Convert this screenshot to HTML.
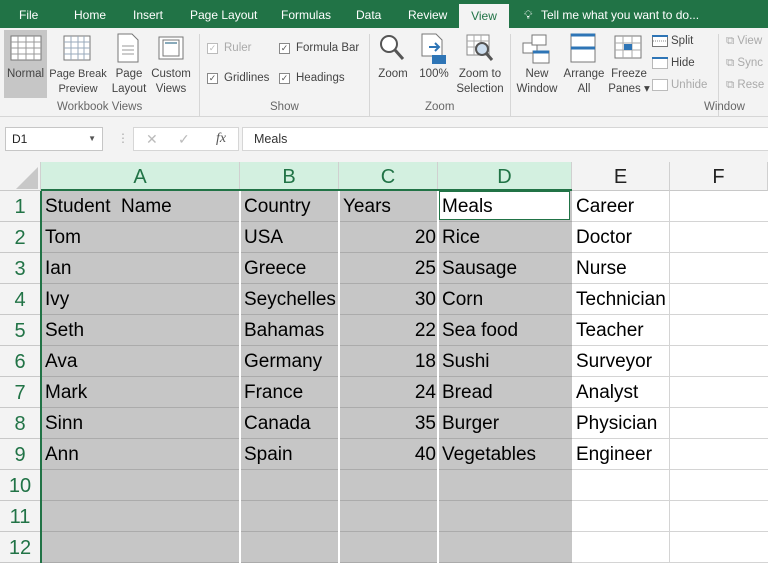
<!DOCTYPE html>
<html><head><meta charset="utf-8"><style>
*{margin:0;padding:0;box-sizing:border-box}
body{width:768px;height:560px;overflow:hidden;background:#fff;font-family:"Liberation Sans",sans-serif;position:relative}
.a{position:absolute}
.tabs{left:0;top:0;width:768px;height:28px;background:#217346;color:#fff;font-size:12px}
.tabs span{position:absolute;top:8px}
.rib{left:0;top:28px;width:768px;height:89px;background:#f3f3f3;border-bottom:1px solid #d6d6d6;font-size:11.5px;color:#444}
.lbl{position:absolute;text-align:center;line-height:15px;white-space:nowrap}
.gl{position:absolute;top:73px;color:#666;font-size:11.5px;white-space:nowrap}
.sep{position:absolute;top:6px;width:1px;height:82px;background:#d6d6d6}
.cb{position:absolute;width:11px;height:11px;border:1px solid #888;background:#fff;font-size:9px;line-height:9px;text-align:center;color:#555}
.fb{left:0;top:117px;width:768px;height:45px;background:#f3f3f3}
.ch{position:absolute;top:162px;height:29px;border-right:1px solid #d0d0d0;border-bottom:1px solid #9bc5ad;text-align:center;font-size:20px;line-height:30px}
.rh{position:absolute;left:0;width:40px;height:31px;border-bottom:1px solid #c8c8c8;background:#f3f3f3;color:#217346;text-align:center;font-size:20px;line-height:32px}
.c{position:absolute;height:31px;font-size:19px;line-height:32px;padding-left:4px;color:#000;white-space:nowrap;overflow:visible}
</style></head><body>
<div class="a tabs">
<span style="left:19px">File</span><span style="left:74px">Home</span><span style="left:133px">Insert</span><span style="left:190px">Page Layout</span><span style="left:281px">Formulas</span><span style="left:356px">Data</span><span style="left:408px">Review</span>
<div class="a" style="left:459px;top:4px;width:50px;height:24px;background:#f3f3f3;color:#217346;text-align:center;line-height:24px">View</div>
<span style="left:524px">💡︎</span><span style="left:541px">Tell me what you want to do...</span>
</div>
<div class="a rib">
<div class="a" style="left:4px;top:2px;width:43px;height:68px;background:#c6c6c6"></div>
<svg class="a" style="left:10px;top:7px" width="32" height="26"><rect x="1" y="1" width="30" height="24" fill="#fff" stroke="#777"/><path d="M1 7h30M1 13h30M1 19h30M8 1v24M16 1v24M24 1v24" stroke="#999"/></svg>
<svg class="a" style="left:63px;top:7px" width="28" height="26"><rect x="1" y="1" width="26" height="24" fill="#fff" stroke="#777"/><path d="M1 7h26M1 13h26M1 19h26M8 1v24M15 1v24M21 1v24" stroke="#9ab"/></svg>
<svg class="a" style="left:117px;top:5px" width="22" height="30"><path d="M1 1h14l6 6v22H1z" fill="#fff" stroke="#777"/><path d="M5 13h12M5 17h12M5 21h12" stroke="#999"/></svg>
<svg class="a" style="left:158px;top:6px" width="28" height="28"><rect x="1" y="3" width="24" height="22" fill="#fff" stroke="#777"/><rect x="5" y="6" width="16" height="16" fill="#fff" stroke="#777"/><path d="M7 9h12" stroke="#8ab" stroke-width="2"/></svg>
<div class="lbl" style="left:4px;top:39px;width:43px">Normal</div>
<div class="lbl" style="left:47px;top:39px;width:62px;font-size:11px">Page Break<br>Preview</div>
<div class="lbl" style="left:110px;top:39px;width:38px">Page<br>Layout</div>
<div class="lbl" style="left:148px;top:39px;width:46px">Custom<br>Views</div>
<div class="gl" style="left:57px">Workbook Views</div>
<div class="sep" style="left:199px"></div>
<div class="cb" style="left:207px;top:15px;border-color:#bbb;color:#bbb">✓</div><span class="a" style="left:224px;top:14px;color:#aaa">Ruler</span>
<div class="cb" style="left:279px;top:15px">✓</div><span class="a" style="left:296px;top:14px">Formula Bar</span>
<div class="cb" style="left:207px;top:45px">✓</div><span class="a" style="left:224px;top:44px">Gridlines</span>
<div class="cb" style="left:279px;top:45px">✓</div><span class="a" style="left:296px;top:44px">Headings</span>
<div class="gl" style="left:270px">Show</div>
<div class="sep" style="left:369px"></div>
<svg class="a" style="left:378px;top:5px" width="28" height="30"><circle cx="11" cy="11" r="8" fill="#fff" stroke="#555" stroke-width="2"/><path d="M17 17l8 9" stroke="#555" stroke-width="3"/></svg>
<svg class="a" style="left:421px;top:5px" width="26" height="32"><path d="M1 1h14l6 6v16H1z" fill="#fff" stroke="#777"/><path d="M8 14h10M14 10l4 4-4 4" stroke="#2e75b6" stroke-width="2" fill="none"/><rect x="11" y="22" width="14" height="9" fill="#2e75b6"/></svg>
<svg class="a" style="left:466px;top:6px" width="30" height="30"><rect x="1" y="1" width="22" height="20" fill="#fff" stroke="#888"/><path d="M1 7h22M1 13h22M8 1v20M15 1v20" stroke="#aaa"/><circle cx="16" cy="15" r="6" fill="#cde" stroke="#555" stroke-width="2"/><path d="M20 19l6 7" stroke="#555" stroke-width="3"/></svg>
<div class="lbl" style="left:374px;top:39px;width:38px">Zoom</div>
<div class="lbl" style="left:416px;top:39px;width:36px">100%</div>
<div class="lbl" style="left:452px;top:39px;width:56px">Zoom to<br>Selection</div>
<div class="gl" style="left:425px">Zoom</div>
<div class="sep" style="left:510px"></div>
<svg class="a" style="left:522px;top:5px" width="30" height="32"><rect x="1" y="10" width="14" height="10" fill="#fff" stroke="#777"/><rect x="10" y="2" width="14" height="10" fill="#fff" stroke="#777"/><rect x="11" y="18" width="16" height="12" fill="#fff" stroke="#777"/><path d="M11 19h16" stroke="#2e75b6" stroke-width="3"/></svg>
<svg class="a" style="left:570px;top:5px" width="26" height="30"><rect x="1" y="1" width="24" height="28" fill="#fff" stroke="#777"/><path d="M1 2h24M1 15h24" stroke="#2e75b6" stroke-width="3"/></svg>
<svg class="a" style="left:614px;top:7px" width="28" height="28"><rect x="1" y="1" width="26" height="22" fill="#fff" stroke="#777"/><path d="M1 8h26M1 15h26M9 1v22M18 1v22" stroke="#aaa"/><rect x="10" y="9" width="8" height="6" fill="#2e75b6"/></svg>
<div class="lbl" style="left:512px;top:39px;width:50px">New<br>Window</div>
<div class="lbl" style="left:562px;top:39px;width:44px">Arrange<br>All</div>
<div class="lbl" style="left:606px;top:39px;width:46px">Freeze<br>Panes ▾</div>
<svg class="a" style="left:652px;top:7px" width="16" height="12"><rect x=".5" y=".5" width="15" height="11" fill="#fff" stroke="#777"/><path d="M0 1h16" stroke="#2e75b6" stroke-width="2"/><path d="M1 6h14" stroke="#888" stroke-dasharray="1 1"/></svg><span class="a" style="left:671px;top:7px">Split</span>
<svg class="a" style="left:652px;top:29px" width="16" height="12"><rect x=".5" y=".5" width="15" height="11" fill="#fff" stroke="#777" stroke-dasharray="1 1"/><path d="M0 1h16" stroke="#2e75b6" stroke-width="2"/></svg><span class="a" style="left:671px;top:29px">Hide</span>
<svg class="a" style="left:652px;top:51px" width="16" height="12"><rect x=".5" y=".5" width="15" height="11" fill="#fff" stroke="#bbb"/></svg><span class="a" style="left:671px;top:51px;color:#aaa">Unhide</span>
<div class="sep" style="left:718px"></div>
<span class="a" style="left:726px;top:7px;color:#aaa">⧉ View</span><span class="a" style="left:726px;top:29px;color:#aaa">⧉ Sync</span><span class="a" style="left:726px;top:51px;color:#aaa">⧉ Rese</span>
<div class="gl" style="left:704px">Window</div>
</div>
<div class="a fb">
<div class="a" style="left:5px;top:10px;width:98px;height:24px;background:#fff;border:1px solid #c6c6c6;font-size:12px;line-height:22px;padding-left:6px;color:#222">D1<span style="position:absolute;right:6px;font-size:8px;color:#555">▼</span></div>
<div class="a" style="left:117px;top:14px;color:#aaa;font-size:12px">⋮</div>
<div class="a" style="left:133px;top:10px;width:106px;height:24px;background:#fff;border:1px solid #d6d6d6;font-size:14px;line-height:22px;color:#bbb"><span class="a" style="left:12px">✕</span><span class="a" style="left:44px">✓</span><span class="a" style="left:82px;color:#555;font-style:italic;font-family:'Liberation Serif',serif">fx</span></div>
<div class="a" style="left:242px;top:10px;width:530px;height:24px;background:#fff;border:1px solid #d6d6d6;font-size:12.5px;line-height:22px;padding-left:11px;color:#333">Meals</div>
</div>
<div class="a" style="left:0;top:162px;width:41px;height:29px;background:#f3f3f3;border-right:1px solid #d0d0d0;border-bottom:1px solid #c8c8c8"><svg class="a" style="left:16px;top:5px" width="22" height="22"><path d="M22 0v22H0z" fill="#c8c8c8"/></svg></div>
<div class="ch" style="left:41px;width:199px;background:#d3f0e0;color:#217346">A</div>
<div class="ch" style="left:240px;width:99px;background:#d3f0e0;color:#217346">B</div>
<div class="ch" style="left:339px;width:99px;background:#d3f0e0;color:#217346">C</div>
<div class="ch" style="left:438px;width:134px;background:#d3f0e0;color:#217346">D</div>
<div class="ch" style="left:572px;width:98px;background:#f3f3f3;color:#222;border-bottom-color:#c8c8c8">E</div>
<div class="ch" style="left:670px;width:98px;background:#f3f3f3;color:#222;border-bottom-color:#c8c8c8">F</div>
<div class="a" style="left:41px;top:189px;width:531px;height:2px;background:#217346"></div>
<div class="a" style="left:41px;top:191px;width:531px;height:372px;background:#c6c6c6;background-image:repeating-linear-gradient(to bottom,transparent 0,transparent 30px,#ababab 30px,#ababab 31px)"></div>
<div class="a" style="left:239px;top:191px;width:2px;height:372px;background:#fff"></div>
<div class="a" style="left:338px;top:191px;width:2px;height:372px;background:#fff"></div>
<div class="a" style="left:437px;top:191px;width:2px;height:372px;background:#fff"></div>
<div class="a" style="left:40px;top:191px;width:2px;height:372px;background:#217346"></div>
<div class="a" style="left:572px;top:191px;width:196px;height:372px;background-image:repeating-linear-gradient(to bottom,transparent 0,transparent 30px,#d4d4d4 30px,#d4d4d4 31px)"></div>
<div class="a" style="left:669px;top:191px;width:1px;height:372px;background:#d4d4d4"></div>
<div class="a" style="left:439px;top:191px;width:131px;height:29px;background:#fff;border:1px solid #217346"></div>
<div class="rh" style="top:191px">1</div><div class="rh" style="top:222px">2</div><div class="rh" style="top:253px">3</div><div class="rh" style="top:284px">4</div><div class="rh" style="top:315px">5</div><div class="rh" style="top:346px">6</div><div class="rh" style="top:377px">7</div><div class="rh" style="top:408px">8</div><div class="rh" style="top:439px">9</div><div class="rh" style="top:470px">10</div><div class="rh" style="top:501px">11</div><div class="rh" style="top:532px">12</div>
<div class="c" style="left:41px;top:191px">Student&nbsp; Name</div><div class="c" style="left:240px;top:191px">Country</div><div class="c" style="left:339px;top:191px">Years</div><div class="c" style="left:438px;top:191px">Meals</div><div class="c" style="left:572px;top:191px">Career</div>
<div class="c" style="left:41px;top:222px">Tom</div><div class="c" style="left:240px;top:222px">USA</div><div class="c" style="left:339px;top:222px;width:97px;text-align:right">20</div><div class="c" style="left:438px;top:222px">Rice</div><div class="c" style="left:572px;top:222px">Doctor</div>
<div class="c" style="left:41px;top:253px">Ian</div><div class="c" style="left:240px;top:253px">Greece</div><div class="c" style="left:339px;top:253px;width:97px;text-align:right">25</div><div class="c" style="left:438px;top:253px">Sausage</div><div class="c" style="left:572px;top:253px">Nurse</div>
<div class="c" style="left:41px;top:284px">Ivy</div><div class="c" style="left:240px;top:284px">Seychelles</div><div class="c" style="left:339px;top:284px;width:97px;text-align:right">30</div><div class="c" style="left:438px;top:284px">Corn</div><div class="c" style="left:572px;top:284px">Technician</div>
<div class="c" style="left:41px;top:315px">Seth</div><div class="c" style="left:240px;top:315px">Bahamas</div><div class="c" style="left:339px;top:315px;width:97px;text-align:right">22</div><div class="c" style="left:438px;top:315px">Sea food</div><div class="c" style="left:572px;top:315px">Teacher</div>
<div class="c" style="left:41px;top:346px">Ava</div><div class="c" style="left:240px;top:346px">Germany</div><div class="c" style="left:339px;top:346px;width:97px;text-align:right">18</div><div class="c" style="left:438px;top:346px">Sushi</div><div class="c" style="left:572px;top:346px">Surveyor</div>
<div class="c" style="left:41px;top:377px">Mark</div><div class="c" style="left:240px;top:377px">France</div><div class="c" style="left:339px;top:377px;width:97px;text-align:right">24</div><div class="c" style="left:438px;top:377px">Bread</div><div class="c" style="left:572px;top:377px">Analyst</div>
<div class="c" style="left:41px;top:408px">Sinn</div><div class="c" style="left:240px;top:408px">Canada</div><div class="c" style="left:339px;top:408px;width:97px;text-align:right">35</div><div class="c" style="left:438px;top:408px">Burger</div><div class="c" style="left:572px;top:408px">Physician</div>
<div class="c" style="left:41px;top:439px">Ann</div><div class="c" style="left:240px;top:439px">Spain</div><div class="c" style="left:339px;top:439px;width:97px;text-align:right">40</div><div class="c" style="left:438px;top:439px">Vegetables</div><div class="c" style="left:572px;top:439px">Engineer</div>
</body></html>
